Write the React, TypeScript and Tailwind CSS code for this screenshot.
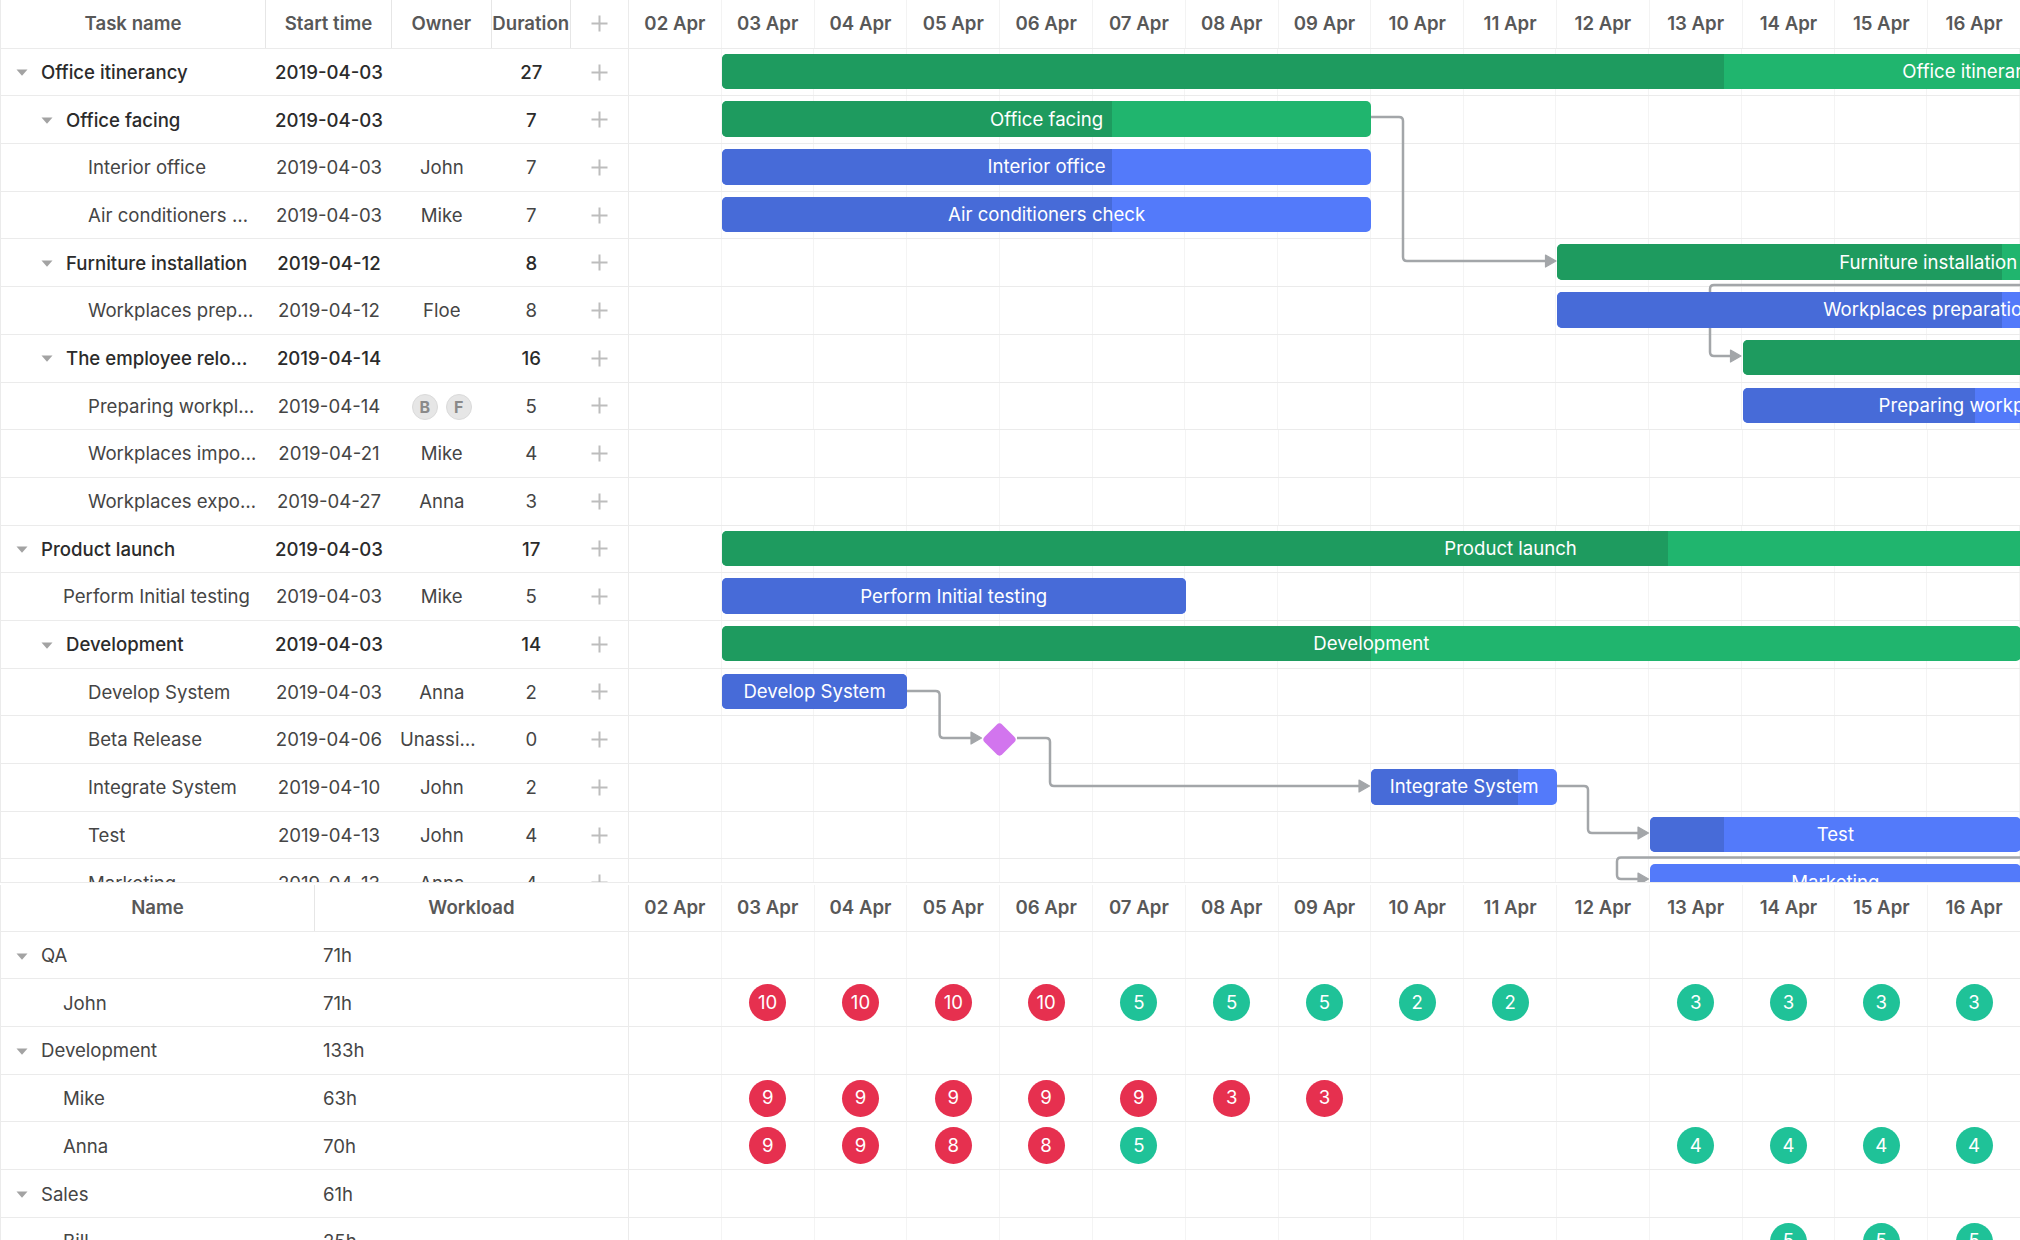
const DAY = 92.8;
const days = ["02 Apr", "03 Apr", "04 Apr", "05 Apr", "06 Apr", "07 Apr", "08 Apr", "09 Apr", "10 Apr", "11 Apr", "12 Apr", "13 Apr", "14 Apr", "15 Apr", "16 Apr"];

type Task = {
  name: string;
  start: string;
  owner?: string;
  badges?: string[];
  dur: number;
  level: 0 | 1 | 2;
  parent?: boolean;
  bar?: { type: "summary" | "task" | "milestone"; day: number; len: number; progress: number; label?: string };
};

const tasks: Task[] = [
  { name: "Office itinerancy", start: "2019-04-03", dur: 27, level: 0, parent: true, bar: { type: "summary", day: 1, len: 27, progress: 0.4, label: "Office itinerancy" } },
  { name: "Office facing", start: "2019-04-03", dur: 7, level: 1, parent: true, bar: { type: "summary", day: 1, len: 7, progress: 0.6, label: "Office facing" } },
  { name: "Interior office", start: "2019-04-03", owner: "John", dur: 7, level: 2, bar: { type: "task", day: 1, len: 7, progress: 0.6, label: "Interior office" } },
  { name: "Air conditioners check", start: "2019-04-03", owner: "Mike", dur: 7, level: 2, bar: { type: "task", day: 1, len: 7, progress: 0.6, label: "Air conditioners check" } },
  { name: "Furniture installation", start: "2019-04-12", dur: 8, level: 1, parent: true, bar: { type: "summary", day: 10, len: 8, progress: 0.6, label: "Furniture installation" } },
  { name: "Workplaces preparation", start: "2019-04-12", owner: "Floe", dur: 8, level: 2, bar: { type: "task", day: 10, len: 8, progress: 0.6, label: "Workplaces preparation" } },
  { name: "The employee relocation", start: "2019-04-14", dur: 16, level: 1, parent: true, bar: { type: "summary", day: 12, len: 16, progress: 0.6, label: "The employee relocation" } },
  { name: "Preparing workplaces", start: "2019-04-14", badges: ["B", "F"], dur: 5, level: 2, bar: { type: "task", day: 12, len: 5, progress: 0.5, label: "Preparing workplaces" } },
  { name: "Workplaces importation", start: "2019-04-21", owner: "Mike", dur: 4, level: 2 },
  { name: "Workplaces exportation", start: "2019-04-27", owner: "Anna", dur: 3, level: 2 },
  { name: "Product launch", start: "2019-04-03", dur: 17, level: 0, parent: true, bar: { type: "summary", day: 1, len: 17, progress: 0.6, label: "Product launch" } },
  { name: "Perform Initial testing", start: "2019-04-03", owner: "Mike", dur: 5, level: 1, bar: { type: "task", day: 1, len: 5, progress: 1, label: "Perform Initial testing" } },
  { name: "Development", start: "2019-04-03", dur: 14, level: 1, parent: true, bar: { type: "summary", day: 1, len: 14, progress: 0.5, label: "Development" } },
  { name: "Develop System", start: "2019-04-03", owner: "Anna", dur: 2, level: 2, bar: { type: "task", day: 1, len: 2, progress: 1, label: "Develop System" } },
  { name: "Beta Release", start: "2019-04-06", owner: "Unassigned", dur: 0, level: 2, bar: { type: "milestone", day: 4, len: 0, progress: 0 } },
  { name: "Integrate System", start: "2019-04-10", owner: "John", dur: 2, level: 2, bar: { type: "task", day: 8, len: 2, progress: 0.79, label: "Integrate System" } },
  { name: "Test", start: "2019-04-13", owner: "John", dur: 4, level: 2, bar: { type: "task", day: 11, len: 4, progress: 0.2, label: "Test" } },
  { name: "Marketing", start: "2019-04-13", owner: "Anna", dur: 4, level: 2, bar: { type: "task", day: 11, len: 4, progress: 0, label: "Marketing" } },
];

type Res = { name: string; load: string; group?: boolean; cells: Record<number, [number, "red" | "green"]> };

const green = (list: number[], v: number) => Object.fromEntries(list.map((d) => [d, [v, "green"]])) as Res["cells"];
const red = (list: number[], v: number) => Object.fromEntries(list.map((d) => [d, [v, "red"]])) as Res["cells"];

const resources: Res[] = [
  { name: "QA", load: "71h", group: true, cells: {} },
  { name: "John", load: "71h", cells: { ...red([1, 2, 3, 4], 10), ...green([5, 6, 7], 5), ...green([8, 9], 2), ...green([11, 12, 13, 14], 3) } },
  { name: "Development", load: "133h", group: true, cells: {} },
  { name: "Mike", load: "63h", cells: { ...red([1, 2, 3, 4, 5], 9), ...red([6, 7], 3) } },
  { name: "Anna", load: "70h", cells: { ...red([1, 2], 9), ...red([3, 4], 8), ...green([5], 5), ...green([11, 12, 13, 14], 4) } },
  { name: "Sales", load: "61h", group: true, cells: {} },
  { name: "Bill", load: "25h", cells: green([12, 13, 14], 5) },
];

function Caret() {
  return (
    <svg width="12" height="7" viewBox="0 0 12 7" className="shrink-0">
      <path d="M0.5 0.5H11.5L6 6.8Z" fill="#a3a3a3" />
    </svg>
  );
}

function PlusIcon() {
  return (
    <svg width="17" height="17" viewBox="0 0 17 17">
      <path d="M8.5 0.5V16.5M0.5 8.5H16.5" stroke="#bdbdbd" strokeWidth="2" fill="none" />
    </svg>
  );
}

function DayHeader() {
  return (
    <div className="flex flex-1">
      {days.map((d) => (
        <div key={d} className="flex-1 flex items-center justify-center border-r border-[#f3f3f3] last:border-r-0">
          {d}
        </div>
      ))}
    </div>
  );
}

function DayCells() {
  return (
    <>
      {days.map((d) => (
        <div key={d} className="flex-1 border-r border-[#f4f4f4] last:border-r-0" />
      ))}
    </>
  );
}

function Bar({ bar }: { bar: NonNullable<Task["bar"]> }) {
  if (bar.type === "milestone") {
    return (
      <div
        className="absolute top-[10.5px] z-20 w-[25px] h-[25px] rotate-45 rounded-[4px] bg-[#d275ee]"
        style={{ left: bar.day * DAY - 13 }}
      />
    );
  }
  const summary = bar.type === "summary";
  return (
    <div
      className={`absolute top-[5px] h-[35.5px] z-20 rounded-[5px] overflow-hidden flex items-center justify-center text-white ${
        summary ? "bg-[#20b56e]" : "bg-[#537afa]"
      }`}
      style={{ left: bar.day * DAY, width: bar.len * DAY }}
    >
      <div
        className={`absolute left-0 top-0 bottom-0 ${summary ? "bg-[#1e9b5f]" : "bg-[#476bd8]"}`}
        style={{ width: `${bar.progress * 100}%` }}
      />
      <span className="relative whitespace-nowrap pt-[1px]">{bar.label}</span>
    </div>
  );
}

function TaskRow({ t }: { t: Task }) {
  const indent = t.level === 0 ? "pl-[15px]" : t.parent ? "pl-[40px] pr-[14px]" : t.level === 1 ? "pl-[62px]" : "pl-[87px] pr-[8.5px]";
  return (
    <div className="flex h-[47.7px] shrink-0 border-b border-[#ebebeb]">
      <div className={`flex w-[629px] shrink-0 border-l border-r border-[#ebebeb] ${t.parent ? "font-medium text-[#2b2b2b]" : "text-[#454545]"}`}>
        <div className={`flex items-center w-[265px] shrink-0 pt-[1.5px] ${indent}`}>
          {t.parent && <Caret />}
          <span className={`truncate ${t.parent ? "ml-[13px]" : ""}`}>{t.name}</span>
        </div>
        <div className="flex items-center justify-center w-[126px] shrink-0 pt-[1.5px]">{t.start}</div>
        <div className="flex items-center justify-center w-[99.5px] shrink-0 px-[8px] pt-[1.5px]">
          {t.badges ? (
            <div className="flex gap-[8px] shrink-0">
              {t.badges.map((b) => (
                <span key={b} className="flex items-center justify-center w-[26px] h-[26px] rounded-full bg-[#e6e6e6] border border-[#dadada] text-[16px] font-bold text-[#8a8a8a]">
                  {b}
                </span>
              ))}
            </div>
          ) : (
            <span className="truncate">{t.owner}</span>
          )}
        </div>
        <div className="flex items-center justify-center w-[79.5px] shrink-0 pt-[1.5px]">{t.dur}</div>
        <div className="flex items-center justify-center flex-1">
          <PlusIcon />
        </div>
      </div>
      <div className="relative flex flex-1">
        <DayCells />
        {t.bar && <Bar bar={t.bar} />}
      </div>
    </div>
  );
}

function ResRow({ r }: { r: Res }) {
  return (
    <div className="flex h-[47.7px] shrink-0 border-b border-[#ebebeb] text-[#454545]">
      <div className="flex w-[629px] shrink-0 border-l border-r border-[#ebebeb] pt-[2px]">
        <div className={`flex items-center w-[314px] shrink-0 ${r.group ? "pl-[15px]" : "pl-[62px]"}`}>
          {r.group && <Caret />}
          <span className={r.group ? "ml-[13px]" : ""}>{r.name}</span>
        </div>
        <div className="flex items-center pl-[8px]">{r.load}</div>
      </div>
      <div className="flex flex-1">
        {days.map((d, i) => (
          <div key={d} className="flex-1 flex items-center justify-center border-r border-[#f4f4f4] last:border-r-0">
            {r.cells[i] && (
              <span
                className={`flex items-center justify-center w-[37px] h-[37px] rounded-full text-white ${
                  r.cells[i][1] === "red" ? "bg-[#e6304f]" : "bg-[#1fc298]"
                }`}
              >
                {r.cells[i][0]}
              </span>
            )}
          </div>
        ))}
      </div>
    </div>
  );
}

function Arrow({ x, y }: { x: number; y: number }) {
  return (
    <polygon
      points={`${x - 11},${y - 6} ${x - 0.5},${y} ${x - 11},${y + 6}`}
      fill="#a3a6a9"
      stroke="#a3a6a9"
      strokeWidth="1.2"
      strokeLinejoin="round"
    />
  );
}

function Links() {
  return (
    <svg className="absolute inset-0 z-10" width="2020" height="882" viewBox="0 0 2020 882">
      <g fill="none" stroke="#a3a6a9" strokeWidth="2.5">
        <path d="M1371 117H1399Q1403 117 1403 121V257Q1403 261 1407 261H1546" />
        <path d="M2030 285H1714Q1710 285 1710 289V352Q1710 356 1714 356H1731" />
        <path d="M906.6 691H935.6Q939.6 691 939.6 695V734Q939.6 738 943.6 738H972" />
        <path d="M1017 738H1046Q1050 738 1050 742V782Q1050 786 1054 786H1360" />
        <path d="M1556 786H1584Q1588 786 1588 790V829Q1588 833 1592 833H1639" />
        <path d="M2030 857.5H1621Q1617 857.5 1617 861.5V875Q1617 879 1621 879H1639" />
      </g>
      <Arrow x={1556.5} y={261} />
      <Arrow x={1741.5} y={356} />
      <Arrow x={982} y={738} />
      <Arrow x={1370} y={786} />
      <Arrow x={1649} y={833} />
      <Arrow x={1649} y={879} />
    </svg>
  );
}

export default function App() {
  return (
    <div className="flex flex-col w-[2020px] h-[1240px] overflow-hidden bg-white text-[18.6px] [font-family:Inter,sans-serif]">
      <div className="relative flex flex-col h-[882px] shrink-0 overflow-hidden">
        <div className="flex h-[48.7px] shrink-0 border-b border-[#ebebeb] font-semibold text-[#585858]">
          <div className="flex w-[629px] shrink-0 border-l border-r border-[#ebebeb]">
            <div className="flex items-center justify-center w-[265px] shrink-0 border-r border-[#e6e6e6]">Task name</div>
            <div className="flex items-center justify-center w-[126px] shrink-0 border-r border-[#e6e6e6]">Start time</div>
            <div className="flex items-center justify-center w-[99.5px] shrink-0 border-r border-[#e6e6e6]">Owner</div>
            <div className="flex items-center justify-center w-[79.5px] shrink-0 border-r border-[#e6e6e6]">Duration</div>
            <div className="flex items-center justify-center flex-1">
              <PlusIcon />
            </div>
          </div>
          <DayHeader />
        </div>
        {tasks.map((t) => (
          <TaskRow key={t.name} t={t} />
        ))}
        <Links />
      </div>
      <div className="flex flex-col flex-1 overflow-hidden border-t border-[#ebebeb]">
        <div className="flex h-[48.7px] shrink-0 border-b border-[#ebebeb] font-semibold text-[#585858] pt-[2px]">
          <div className="flex w-[629px] shrink-0 border-l border-r border-[#ebebeb]">
            <div className="flex items-center justify-center w-[314px] shrink-0 border-r border-[#e6e6e6]">Name</div>
            <div className="flex items-center justify-center flex-1">Workload</div>
          </div>
          <DayHeader />
        </div>
        {resources.map((r) => (
          <ResRow key={r.name} r={r} />
        ))}
      </div>
    </div>
  );
}
